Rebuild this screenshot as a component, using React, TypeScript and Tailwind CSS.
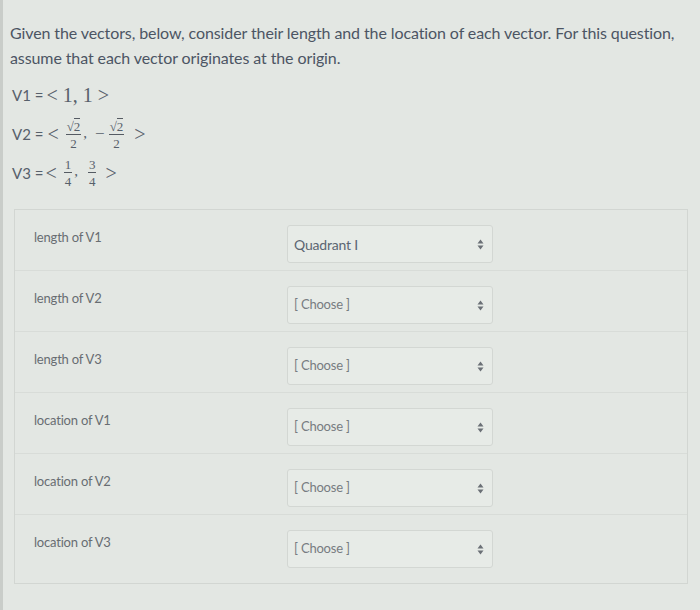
import type { ReactNode } from "react";

const rows = [
  { label: "length of V1", value: "Quadrant I", chosen: true },
  { label: "length of V2", value: "[ Choose ]", chosen: false },
  { label: "length of V3", value: "[ Choose ]", chosen: false },
  { label: "location of V1", value: "[ Choose ]", chosen: false },
  { label: "location of V2", value: "[ Choose ]", chosen: false },
  { label: "location of V3", value: "[ Choose ]", chosen: false },
];

function Frac({ top, bottom }: { top: ReactNode; bottom: ReactNode }) {
  return (
    <span className="inline-flex flex-col items-center align-middle mx-[2px] leading-none">
      <span className="text-[13px] px-[1px] pb-[1px] border-b border-[#555b63]">{top}</span>
      <span className="text-[13px] pt-[2px]">{bottom}</span>
    </span>
  );
}

function Sqrt2() {
  return (
    <span className="inline-flex items-end">
      <span className="text-[13px]">√</span>
      <span className="border-t border-[#555b63] text-[13px] leading-none pt-[1px]">2</span>
    </span>
  );
}

function Arrows() {
  return (
    <svg width="7" height="11" viewBox="0 0 7 11" className="shrink-0">
      <path d="M3.5 0.5 L6.5 4.5 L0.5 4.5 Z" fill="#6b7076" />
      <path d="M3.5 10.5 L6.5 6.5 L0.5 6.5 Z" fill="#6b7076" />
    </svg>
  );
}

export default function App() {
  return (
    <div
      className="w-[700px] h-[610px] overflow-hidden bg-[#e3e7e3] border-l-[3px] border-[#c9cdc9] text-[#4c5563]"
      style={{ fontFamily: "Lato, 'Open Sans', sans-serif" }}
    >
      <p className="pt-[20px] pl-[7px] text-[16px] leading-[25px] tracking-[-0.1px]">
        Given the vectors, below, consider their length and the location of each vector. For this question,
        <br />
        assume that each vector originates at the origin.
      </p>

      <div className="pl-[9px] mt-[11px] text-[#57606b]">
        <div className="h-[28px] flex items-center gap-[3px] text-[15px]">
          <span>V1 =</span>
          <span className="text-[20px]" style={{ fontFamily: "'Liberation Serif', serif" }}>
            &lt; 1, 1 &gt;
          </span>
        </div>

        <div className="mt-[7px] h-[36px] flex items-center gap-[4px] text-[15px]">
          <span>V2 =</span>
          <span className="flex items-center" style={{ fontFamily: "'Liberation Serif', serif" }}>
            <span className="text-[20px] mr-[5px]">&lt;</span>
            <Frac top={<Sqrt2 />} bottom="2" />
            <span className="text-[15px] self-end mb-[6px] mr-[8px]">,</span>
            <span className="text-[17px] mr-[2px]">−</span>
            <Frac top={<Sqrt2 />} bottom="2" />
            <span className="text-[20px] ml-[8px]">&gt;</span>
          </span>
        </div>

        <div className="mt-[3px] h-[36px] flex items-center gap-[2px] text-[15px]">
          <span>V3 =</span>
          <span className="flex items-center" style={{ fontFamily: "'Liberation Serif', serif" }}>
            <span className="text-[20px] mr-[5px]">&lt;</span>
            <Frac top="1" bottom="4" />
            <span className="text-[15px] self-end mb-[6px] mr-[8px]">,</span>
            <Frac top="3" bottom="4" />
            <span className="text-[20px] ml-[7px]">&gt;</span>
          </span>
        </div>
      </div>

      <div className="mt-[18px] ml-[11px] w-[674px] border-t border-l border-b border-r border-[#d2d6d2]">
        {rows.map((r, i) => (
          <div
            key={r.label}
            className={
              i < rows.length - 1
                ? "h-[61px] flex items-start border-b border-[#d8dcd8]"
                : "h-[68px] flex items-start"
            }
          >
            <div className="w-[272px] pl-[19px] pt-[18px] text-[13px] text-[#686d72] tracking-[-0.2px]">
              {r.label}
            </div>
            <div className="mt-[15px] w-[206px] h-[38px] flex items-center justify-between pl-[6px] pr-[8px] bg-[#e7ebe7] border border-[#d3d7d3] rounded-[3px]">
              <span
                className={
                  r.chosen
                    ? "text-[14px] text-[#5b6572] tracking-[-0.2px]"
                    : "text-[13px] text-[#777c81] tracking-[-0.2px]"
                }
              >
                {r.value}
              </span>
              <Arrows />
            </div>
          </div>
        ))}
      </div>
    </div>
  );
}
